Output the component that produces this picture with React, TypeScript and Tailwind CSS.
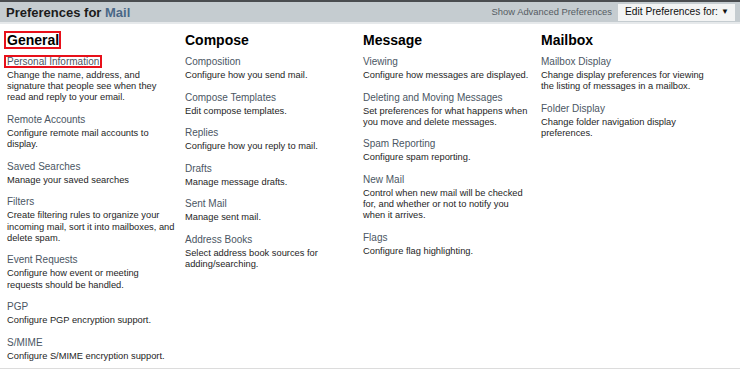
import type React from "react"

type Item = { title: string; desc: string; boxed?: boolean }
type Column = { heading: string; boxed?: boolean; items: Item[] }

const columns: Column[] = [
  {
    heading: "General",
    boxed: true,
    items: [
      {
        title: "Personal Information",
        desc: "Change the name, address, and signature that people see when they read and reply to your email.",
        boxed: true,
      },
      { title: "Remote Accounts", desc: "Configure remote mail accounts to display." },
      { title: "Saved Searches", desc: "Manage your saved searches" },
      {
        title: "Filters",
        desc: "Create filtering rules to organize your incoming mail, sort it into mailboxes, and delete spam.",
      },
      { title: "Event Requests", desc: "Configure how event or meeting requests should be handled." },
      { title: "PGP", desc: "Configure PGP encryption support." },
      { title: "S/MIME", desc: "Configure S/MIME encryption support." },
    ],
  },
  {
    heading: "Compose",
    items: [
      { title: "Composition", desc: "Configure how you send mail." },
      { title: "Compose Templates", desc: "Edit compose templates." },
      { title: "Replies", desc: "Configure how you reply to mail." },
      { title: "Drafts", desc: "Manage message drafts." },
      { title: "Sent Mail", desc: "Manage sent mail." },
      { title: "Address Books", desc: "Select address book sources for adding/searching." },
    ],
  },
  {
    heading: "Message",
    items: [
      { title: "Viewing", desc: "Configure how messages are displayed." },
      {
        title: "Deleting and Moving Messages",
        desc: "Set preferences for what happens when you move and delete messages.",
      },
      { title: "Spam Reporting", desc: "Configure spam reporting." },
      {
        title: "New Mail",
        desc: "Control when new mail will be checked for, and whether or not to notify you when it arrives.",
      },
      { title: "Flags", desc: "Configure flag highlighting." },
    ],
  },
  {
    heading: "Mailbox",
    items: [
      {
        title: "Mailbox Display",
        desc: "Change display preferences for viewing the listing of messages in a mailbox.",
      },
      { title: "Folder Display", desc: "Change folder navigation display preferences." },
    ],
  },
]

const PrefColumn: React.FC<{ col: Column }> = ({ col }) => (
  <div className="w-[178px]">
    <h2 className="h-[20px] text-[14px] leading-[18px] font-bold text-black">
      <span className={col.boxed ? "inline-block border-2 border-[#e8101a] pl-[1px] leading-[14px]" : "inline-block px-[3px]"}>
        {col.heading}
      </span>
    </h2>
    <div className="mt-[4px] flex flex-col gap-[9.4px]">
      {col.items.map((it) => (
        <div key={it.title}>
          <div className="h-[15px] text-[10px] leading-[14px] text-[#4b5663]">
            <span className={it.boxed ? "inline-block border-2 border-[#e8101a] px-[1px] leading-[9px]" : "inline-block px-[3px]"}>
              {it.title}
            </span>
          </div>
          <p className="pl-[3px] w-[173px] text-[9.3px] leading-[11.2px] text-[#1e1e1e]">{it.desc}</p>
        </div>
      ))}
    </div>
  </div>
)

export default function App() {
  return (
    <div className="w-[740px] h-[371px] bg-white overflow-hidden font-['Liberation_Sans',Arial,sans-serif]">
      {/* header bar */}
      <div className="border-t-2 border-[#4a4d50] bg-[#c5ccd0] h-[22px] flex items-center justify-between pl-[6px] pr-[5px]">
        <h1 className="text-[13px] font-bold text-[#1b1b1b] leading-none">
          Preferences for <span className="text-[#4a6887]">Mail</span>
        </h1>
        <div className="flex items-center gap-[6px]">
          <span className="text-[9.4px] text-[#555c63]">Show Advanced Preferences</span>
          <div className="h-[17px] w-[117px] bg-[#f3f4f4] flex items-center justify-between pl-[7px] pr-[6px] text-[10.2px] text-[#111]">
            <span>Edit Preferences for:</span>
            <span className="text-[8px]">▼</span>
          </div>
        </div>
      </div>
      <div className="h-[2px] bg-[#e6e9eb]" />

      {/* columns */}
      <div className="h-[345px] border-b border-[#dcdcdc] flex pl-[4px] pt-[7px]">
        {columns.map((c) => (
          <PrefColumn key={c.heading} col={c} />
        ))}
      </div>
    </div>
  )
}
